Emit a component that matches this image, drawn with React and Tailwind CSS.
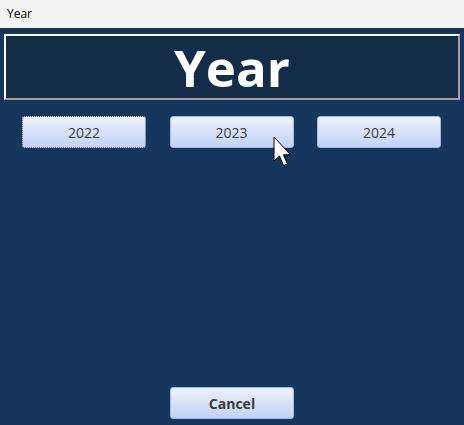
import React from 'react';

const YEARS = ['2022', '2023', '2024'];

function YearButton({ label, focused, bold }) {
  return (
    <button
      type="button"
      className={
        'h-[32px] w-[124px] rounded-[3px] border bg-gradient-to-b from-[#eef2fd] to-[#c2d1f6] text-[14px] text-[#3a3a3a] ' +
        (focused ? 'border-dotted border-[#4a4f60] ' : 'border-[#a9b8dc] ') +
        (bold ? 'font-bold' : '')
      }
    >
      {label}
    </button>
  );
}

function Cursor() {
  return (
    <svg className="absolute left-[273px] top-[136px]" width="22" height="34" viewBox="0 0 22 34">
      <path
        d="M1 1 L1 25 L6.5 20 L10.5 29.5 L14.5 28 L10.5 18.8 L17.5 18.8 Z"
        fill="#fff"
        stroke="#000"
        strokeWidth="1"
        strokeLinejoin="miter"
      />
    </svg>
  );
}

export default function App() {
  return (
    <div
      className="relative flex h-[425px] w-[464px] flex-col bg-[#17365d]"
      style={{ fontFamily: '"Open Sans", "Noto Sans", sans-serif' }}
    >
      {/* window title bar */}
      <div className="flex h-[28px] items-center bg-[#f3f3f3] pl-[7px] text-[12px] text-black">Year</div>

      <div className="flex flex-1 flex-col px-[4px] pt-[6px]">
        <div className="flex h-[66px] items-center justify-center border-2 border-b-[#a0a0a0] border-l-white border-r-[#a0a0a0] border-t-white bg-[#132c47]">
          <span className="text-[51px] font-bold leading-none text-white">Year</span>
        </div>

        <div className="mt-[16px] flex justify-between pl-[18px] pr-[19px]">
          {YEARS.map((y, i) => (
            <YearButton key={y} label={y} focused={i === 0} />
          ))}
        </div>

        <div className="mt-auto mb-[6px] flex justify-center">
          <YearButton label="Cancel" bold />
        </div>
      </div>

      <Cursor />
    </div>
  );
}
